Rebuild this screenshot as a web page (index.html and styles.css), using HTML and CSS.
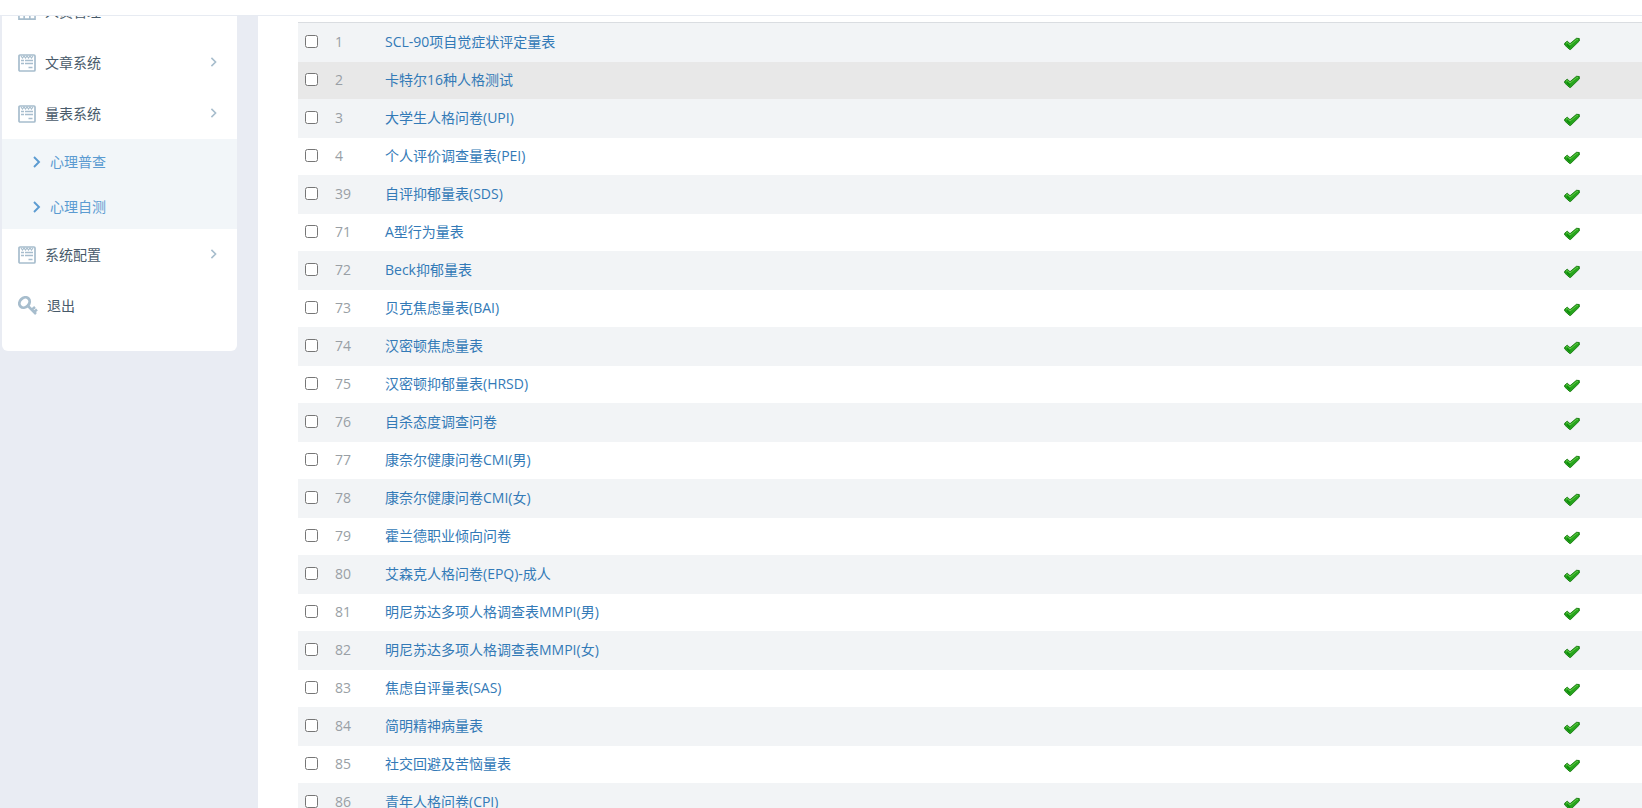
FILE: index.html
```html
<!DOCTYPE html>
<html lang="zh-Hans">
<head>
  <meta charset="UTF-8" />
  <title>心理自测</title>
  <link rel="stylesheet" href="styles.css">
</head>
<body>

  <svg class="sprite" aria-hidden="true">
    <symbol id="ico-note" viewBox="0 0 18 18">
      <rect x="1" y="1" width="16" height="16" rx="1" fill="none" stroke="currentColor" stroke-width="1.700"/>
      <path d="M3 2l1.500 2 1.500-2 1.500 2 1.500-2 1.500 2 1.500-2 1.500 2 1.500-2" fill="none" stroke="currentColor" stroke-width="1.200"/>
      <path d="M3 6.500h3M7 6.500h8M3 9.500h3M7 9.500h8M10.500 13.500h4" fill="none" stroke="currentColor" stroke-width="1.500"/>
    </symbol>
    <symbol id="ico-grid" viewBox="0 0 19 18">
      <path d="M1 1h17v15.500H1zM1 6h17M1 11h17M6.500 6v10.500M12.500 6v10.500" fill="none" stroke="currentColor" stroke-width="1.700"/>
    </symbol>
    <symbol id="ico-key" viewBox="0 0 20 19">
      <ellipse cx="6.500" cy="6.500" rx="5.600" ry="4.600" transform="rotate(-45 6.500 6.500)" fill="none" stroke="currentColor" stroke-width="2.900"/>
      <path d="M9.500 9.500l8.500 8.500M13.500 14l3.500-3M15.500 16.500l3.500-3" fill="none" stroke="currentColor" stroke-width="2.500"/>
    </symbol>
    <symbol id="ico-arrow" viewBox="0 0 8 12">
      <path d="M1.500 1l5 5-5 5" fill="none" stroke="currentColor" stroke-width="1.900"/>
    </symbol>
    <symbol id="ico-tick" viewBox="0 0 16 16">
      <path d="M.7 7.200L3.200 5.200 6 7.700 12.500 2.300 15.300 2.500V5L6.600 13.500H5.600L.7 9z" fill="#27a51d" stroke="#16790f" stroke-width=".9" stroke-linejoin="round"/>
      <path d="M2 7.200l1.300-.8 2.600 2.600 6.900-5.400h1.200" fill="none" stroke="#6fd04e" stroke-width=".8"/>
      <path d="M3 8.500l3 3" stroke="#0b8d0b" stroke-width="1.600"/>
    </symbol>
  </svg>

  <header class="topbar"></header>

  <div class="page">
    <aside class="sidebar">
      <ul class="menu">
        <li><a href="#"><svg class="icon"><use href="#ico-grid"/></svg><span>人员管理</span></a></li>
        <li><a href="#"><svg class="icon"><use href="#ico-note"/></svg><span>文章系统</span><svg class="arrow"><use href="#ico-arrow"/></svg></a></li>
        <li>
          <a href="#"><svg class="icon"><use href="#ico-note"/></svg><span>量表系统</span><svg class="arrow"><use href="#ico-arrow"/></svg></a>
          <ul class="submenu">
            <li><a href="#"><svg class="sub-arrow"><use href="#ico-arrow"/></svg><span>心理普查</span></a></li>
            <li><a href="#"><svg class="sub-arrow"><use href="#ico-arrow"/></svg><span>心理自测</span></a></li>
          </ul>
        </li>
        <li><a href="#"><svg class="icon"><use href="#ico-note"/></svg><span>系统配置</span><svg class="arrow"><use href="#ico-arrow"/></svg></a></li>
        <li><a href="#"><svg class="icon icon-key"><use href="#ico-key"/></svg><span>退出</span></a></li>
      </ul>
    </aside>

    <main class="content">
      <table class="scales">
        <colgroup>
          <col class="col-check"><col class="col-id"><col><col class="col-state">
        </colgroup>
        <tbody>
          <tr>
            <td><input type="checkbox" id="s1"></td>
            <td><label for="s1">1</label></td>
            <td><a href="#">SCL-90项自觉症状评定量表</a></td>
            <td><svg class="tick"><use href="#ico-tick"/></svg></td>
          </tr>
          <tr class="hover">
            <td><input type="checkbox" id="s2"></td>
            <td><label for="s2">2</label></td>
            <td><a href="#">卡特尔16种人格测试</a></td>
            <td><svg class="tick"><use href="#ico-tick"/></svg></td>
          </tr>
          <tr>
            <td><input type="checkbox" id="s3"></td>
            <td><label for="s3">3</label></td>
            <td><a href="#">大学生人格问卷(UPI)</a></td>
            <td><svg class="tick"><use href="#ico-tick"/></svg></td>
          </tr>
          <tr>
            <td><input type="checkbox" id="s4"></td>
            <td><label for="s4">4</label></td>
            <td><a href="#">个人评价调查量表(PEI)</a></td>
            <td><svg class="tick"><use href="#ico-tick"/></svg></td>
          </tr>
          <tr>
            <td><input type="checkbox" id="s39"></td>
            <td><label for="s39">39</label></td>
            <td><a href="#">自评抑郁量表(SDS)</a></td>
            <td><svg class="tick"><use href="#ico-tick"/></svg></td>
          </tr>
          <tr>
            <td><input type="checkbox" id="s71"></td>
            <td><label for="s71">71</label></td>
            <td><a href="#">A型行为量表</a></td>
            <td><svg class="tick"><use href="#ico-tick"/></svg></td>
          </tr>
          <tr>
            <td><input type="checkbox" id="s72"></td>
            <td><label for="s72">72</label></td>
            <td><a href="#">Beck抑郁量表</a></td>
            <td><svg class="tick"><use href="#ico-tick"/></svg></td>
          </tr>
          <tr>
            <td><input type="checkbox" id="s73"></td>
            <td><label for="s73">73</label></td>
            <td><a href="#">贝克焦虑量表(BAI)</a></td>
            <td><svg class="tick"><use href="#ico-tick"/></svg></td>
          </tr>
          <tr>
            <td><input type="checkbox" id="s74"></td>
            <td><label for="s74">74</label></td>
            <td><a href="#">汉密顿焦虑量表</a></td>
            <td><svg class="tick"><use href="#ico-tick"/></svg></td>
          </tr>
          <tr>
            <td><input type="checkbox" id="s75"></td>
            <td><label for="s75">75</label></td>
            <td><a href="#">汉密顿抑郁量表(HRSD)</a></td>
            <td><svg class="tick"><use href="#ico-tick"/></svg></td>
          </tr>
          <tr>
            <td><input type="checkbox" id="s76"></td>
            <td><label for="s76">76</label></td>
            <td><a href="#">自杀态度调查问卷</a></td>
            <td><svg class="tick"><use href="#ico-tick"/></svg></td>
          </tr>
          <tr>
            <td><input type="checkbox" id="s77"></td>
            <td><label for="s77">77</label></td>
            <td><a href="#">康奈尔健康问卷CMI(男)</a></td>
            <td><svg class="tick"><use href="#ico-tick"/></svg></td>
          </tr>
          <tr>
            <td><input type="checkbox" id="s78"></td>
            <td><label for="s78">78</label></td>
            <td><a href="#">康奈尔健康问卷CMI(女)</a></td>
            <td><svg class="tick"><use href="#ico-tick"/></svg></td>
          </tr>
          <tr>
            <td><input type="checkbox" id="s79"></td>
            <td><label for="s79">79</label></td>
            <td><a href="#">霍兰德职业倾向问卷</a></td>
            <td><svg class="tick"><use href="#ico-tick"/></svg></td>
          </tr>
          <tr>
            <td><input type="checkbox" id="s80"></td>
            <td><label for="s80">80</label></td>
            <td><a href="#">艾森克人格问卷(EPQ)-成人</a></td>
            <td><svg class="tick"><use href="#ico-tick"/></svg></td>
          </tr>
          <tr>
            <td><input type="checkbox" id="s81"></td>
            <td><label for="s81">81</label></td>
            <td><a href="#">明尼苏达多项人格调查表MMPI(男)</a></td>
            <td><svg class="tick"><use href="#ico-tick"/></svg></td>
          </tr>
          <tr>
            <td><input type="checkbox" id="s82"></td>
            <td><label for="s82">82</label></td>
            <td><a href="#">明尼苏达多项人格调查表MMPI(女)</a></td>
            <td><svg class="tick"><use href="#ico-tick"/></svg></td>
          </tr>
          <tr>
            <td><input type="checkbox" id="s83"></td>
            <td><label for="s83">83</label></td>
            <td><a href="#">焦虑自评量表(SAS)</a></td>
            <td><svg class="tick"><use href="#ico-tick"/></svg></td>
          </tr>
          <tr>
            <td><input type="checkbox" id="s84"></td>
            <td><label for="s84">84</label></td>
            <td><a href="#">简明精神病量表</a></td>
            <td><svg class="tick"><use href="#ico-tick"/></svg></td>
          </tr>
          <tr>
            <td><input type="checkbox" id="s85"></td>
            <td><label for="s85">85</label></td>
            <td><a href="#">社交回避及苦恼量表</a></td>
            <td><svg class="tick"><use href="#ico-tick"/></svg></td>
          </tr>
          <tr>
            <td><input type="checkbox" id="s86"></td>
            <td><label for="s86">86</label></td>
            <td><a href="#">青年人格问卷(CPI)</a></td>
            <td><svg class="tick"><use href="#ico-tick"/></svg></td>
          </tr>
        </tbody>
      </table>
    </main>
  </div>

</body>
</html>
```
FILE: styles.css
```css
* {
  box-sizing: border-box;
}
body {
  margin: 0;
  height: 100vh;
  display: flex;
  flex-direction: column;
  overflow: hidden;
  font-family: "Open Sans", "Noto Sans CJK SC", sans-serif;
  font-size: 14px;
  line-height: 20px;
  background: #e9ecf3;
}
a {
  color: #337ab7;
  text-decoration: none;
}
ul {
  list-style: none;
  margin: 0;
  padding: 0;
}
.sprite {
  display: none;
}
.topbar {
  flex: 0 0 16px;
  background: #fff;
  border-bottom: 1px solid #e7ebf2;
}
.page {
  flex: 1;
  min-height: 0;
  display: flex;
  overflow: hidden;
}

/* sidebar */
.sidebar {
  flex: 0 0 258px;
  padding: 0 21px 0 2px;
  overflow: hidden;
}
.menu {
  margin-top: -30px; /* scrolled under the top bar */
  padding-bottom: 20px;
  background: #fff;
  border-radius: 6px;
}
.menu a {
  display: flex;
  align-items: center;
  gap: 9px;
  height: 51px;
  padding: 0 20px 0 16px;
  color: #485a6a;
}
.icon {
  width: 18px;
  height: 18px;
  color: #a7bdcd;
}
.icon-key {
  width: 20px;
  height: 19px;
}
.arrow {
  width: 7px;
  height: 10px;
  margin: 0 0 2px auto;
  color: #a7bdcd;
}
.submenu {
  background: #f2f6f9;
}
.submenu a {
  height: 45px;
  padding-left: 30px;
  color: #5b9bd1;
}
.sub-arrow {
  width: 9px;
  height: 12px;
}

/* list */
.content {
  flex: 1;
  min-width: 0;
  padding: 6px 0 0 40px;
  background: #fff;
}
.scales {
  width: 100%;
  table-layout: fixed;
  border-collapse: separate;
  border-spacing: 0;
  border-top: 1px solid #dadde1;
}
.col-check { width: 30px; }
.col-id    { width: 50px; }
.col-state { width: 140px; }
td {
  height: 38px;
  padding: 0 7px 2px;
  border-top: 1px solid #f2f4f6;
  color: #999fa5;
  vertical-align: middle;
}
tr:nth-child(odd) td {
  background: #f2f4f6;
}
tr.hover td {
  background: #e8e8e8;
}
td:last-child {
  text-align: center;
}
td input {
  display: block;
  width: 13px;
  height: 13px;
  margin: 0;
}
.tick {
  display: block;
  width: 16px;
  height: 16px;
  margin: 5px auto 0;
}
```
